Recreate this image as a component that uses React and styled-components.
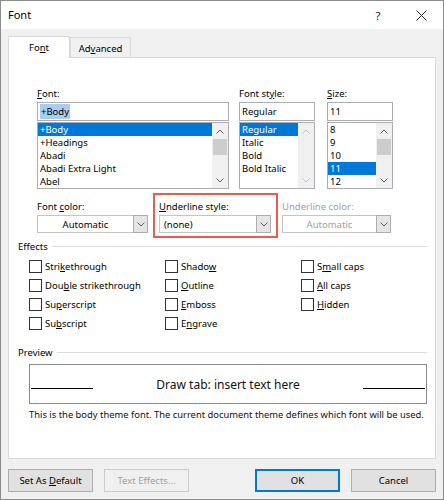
import React from 'react';
import styled, { createGlobalStyle, css } from 'styled-components';

const UI = '"Noto Sans", "Segoe UI", sans-serif';

const Global = createGlobalStyle`
  html, body { margin: 0; padding: 0; background: #fff; }
  body { font-family: ${UI}; font-size: 9.5px; color: #000; }
  * { box-sizing: border-box; }
`;

const Window = styled.div`
  width: 444px;
  height: 500px;
  border: 1px solid #8c8c8c;
  background: #f0f0f0;
  display: flex;
  flex-direction: column;
`;

const TitleBar = styled.div`
  height: 28px;
  background: #fff;
  display: flex;
  align-items: center;
  padding: 0 7px;
`;

const Title = styled.div`
  font-size: 11px;
  flex: 1;
  line-height: 14px;
`;

const TitleButton = styled.div`
  width: 30px;
  height: 28px;
  display: flex;
  align-items: center;
  justify-content: center;
  font-size: 11.5px;
  color: #222;
  margin-left: ${(p) => p.$ml || 0}px;
`;

const TabRow = styled.div`
  height: 28px;
  display: flex;
  align-items: flex-end;
  padding-left: 7px;
`;

const Tab = styled.div`
  display: flex;
  align-items: center;
  justify-content: center;
  border: 1px solid #d9d9d9;
  border-bottom: none;
  ${(p) =>
    p.$active
      ? css`
          width: 62px;
          height: 22px;
          margin-bottom: -1px;
          background: #fff;
          position: relative;
          z-index: 1;
        `
      : css`
          width: 61px;
          height: 20px;
          background: #f0f0f0;
          padding-top: 1px;
        `}
`;

const Panel = styled.div`
  margin: 0 7px;
  height: 402px;
  background: #fff;
  border: 1px solid #d9d9d9;
  padding: 28px 8px 0 9px;
  display: flex;
  flex-direction: column;
`;

const Row = styled.div`
  display: flex;
  margin-left: 19px;
  margin-top: ${(p) => p.$mt || 0}px;
`;

const Column = styled.div`
  width: ${(p) => p.$w}px;
  margin-left: ${(p) => p.$ml || 0}px;
  display: flex;
  flex-direction: column;
  position: relative;
  ${(p) =>
    p.$highlight &&
    css`
      &::before {
        content: '';
        position: absolute;
        top: -6px;
        left: -6px;
        right: -7px;
        bottom: -5px;
        border: 2px solid #ef5a4e;
        pointer-events: none;
      }
    `}
`;

const Label = styled.div`
  height: 15px;
  line-height: 15px;
  margin-bottom: 1px;
  white-space: nowrap;
  color: ${(p) => (p.$disabled ? '#a0a0a0' : '#000')};
`;

const U = styled.span`
  text-decoration: underline;
  text-underline-offset: 1px;
`;

const TextBox = styled.div`
  height: 19px;
  border: 1px solid #abadb3;
  display: flex;
  align-items: center;
  padding-left: 2px;
`;

const Sel = styled.span`
  background: #a8cdf0;
  padding: 0 1px;
  line-height: 15px;
`;

const ListBox = styled.div`
  margin-top: 1px;
  height: 67px;
  border: 1px solid #abadb3;
  display: flex;
`;

const Items = styled.div`
  flex: 1;
  display: flex;
  flex-direction: column;
`;

const Item = styled.div`
  height: 13px;
  line-height: 13px;
  padding-left: 2px;
  white-space: nowrap;
  ${(p) =>
    p.$selected &&
    css`
      background: #0078d7;
      color: #fff;
    `}
`;

const ScrollBar = styled.div`
  width: 16px;
  background: #f0f0f0;
  display: flex;
  flex-direction: column;
`;

const ScrollArrow = styled.div`
  height: 16px;
  display: flex;
  align-items: center;
  justify-content: center;
`;

const Track = styled.div`
  flex: 1;
`;

const Thumb = styled.div`
  height: 16px;
  margin: 0 1px;
  background: #cdcdcd;
`;

const Combo = styled.div`
  height: 18px;
  border: 1px solid #c4c4c4;
  background: #fff;
  display: flex;
`;

const ComboValue = styled.div`
  flex: 1;
  display: flex;
  align-items: center;
  justify-content: ${(p) => (p.$center ? 'center' : 'flex-start')};
  padding-left: ${(p) => (p.$center ? 0 : 4)}px;
  color: ${(p) => (p.$disabled ? '#a0a0a0' : '#000')};
`;

const DropButton = styled.div`
  width: 15px;
  margin: -1px -1px -1px 0;
  border: 1px solid #adadad;
  background: #e5e5e5;
  display: flex;
  align-items: center;
  justify-content: center;
`;

const GroupHeader = styled.div`
  display: flex;
  align-items: center;
  height: 14px;
  margin-top: ${(p) => p.$mt || 0}px;
`;

const GroupLine = styled.div`
  flex: 1;
  margin-left: 4px;
  border-top: 1px solid #dcdcdc;
`;

const CheckGrid = styled.div`
  display: grid;
  grid-template-columns: repeat(3, 136px);
  grid-auto-rows: 19px;
  margin: 4px 0 0 11px;
`;

const Check = styled.div`
  display: flex;
  align-items: center;
`;

const Box = styled.div`
  width: 13px;
  height: 13px;
  border: 1px solid #333;
  background: #fff;
  margin-right: 3px;
`;

const PreviewBox = styled.div`
  margin: 5px 0 0 11px;
  height: 40px;
  border: 1px solid #8c8c8c;
  display: flex;
  align-items: center;
  justify-content: space-between;
  padding: 0 1px;
`;

const PreviewText = styled.div`
  font-size: 12px;
  color: #111;
`;

const Rule = styled.div`
  width: 62px;
  height: 10px;
  border-bottom: 1px solid #000;
`;

const Note = styled.div`
  margin: 4px 0 0 11px;
  line-height: 14px;
  font-size: 9.4px;
  color: #111;
  white-space: nowrap;
`;

const ButtonRow = styled.div`
  display: flex;
  margin-top: 10px;
  padding: 0 7px;
`;

const Button = styled.div`
  width: 85px;
  height: 23px;
  display: flex;
  align-items: center;
  justify-content: center;
  white-space: pre;
  margin-left: ${(p) => (p.$auto ? 'auto' : `${p.$ml || 0}px`)};
  background: ${(p) => (p.$disabled ? '#f0f0f0' : '#e1e1e1')};
  border: 1px solid ${(p) => (p.$disabled ? '#cccccc' : p.$default ? '#0078d7' : '#adadad')};
  color: ${(p) => (p.$disabled ? '#a0a0a0' : '#000')};
  ${(p) => p.$default && css`box-shadow: inset 0 0 0 1px #0078d7;`}
`;

const Chevron = ({ up, color = '#606060' }) => (
  <svg width="8" height="5" viewBox="0 0 8 5">
    <path
      d={up ? 'M0.5 4.5 L4 1 L7.5 4.5' : 'M0.5 0.5 L4 4 L7.5 0.5'}
      fill="none"
      stroke={color}
      strokeWidth="1"
    />
  </svg>
);

const Scroll = ({ disabled }) => (
  <ScrollBar>
    <ScrollArrow>
      <Chevron up color={disabled ? '#c4c4c4' : '#606060'} />
    </ScrollArrow>
    <Track>{!disabled && <Thumb />}</Track>
    <ScrollArrow>
      <Chevron color={disabled ? '#c4c4c4' : '#606060'} />
    </ScrollArrow>
  </ScrollBar>
);

const List = ({ items, selected, disabledScroll }) => (
  <ListBox>
    <Items>
      {items.map((it) => (
        <Item key={it} $selected={it === selected}>
          {it}
        </Item>
      ))}
    </Items>
    <Scroll disabled={disabledScroll} />
  </ListBox>
);

const Drop = ({ children, center, disabled }) => (
  <Combo>
    <ComboValue $center={center} $disabled={disabled}>
      {children}
    </ComboValue>
    <DropButton>
      <Chevron color="#606060" />
    </DropButton>
  </Combo>
);

const effects = [
  [<>Stri<U>k</U>ethrough</>, <>Shado<U>w</U></>, <>S<U>m</U>all caps</>],
  [<>Dou<U>b</U>le strikethrough</>, <><U>O</U>utline</>, <><U>A</U>ll caps</>],
  [<>Su<U>p</U>erscript</>, <><U>E</U>mboss</>, <><U>H</U>idden</>],
  [<>Su<U>b</U>script</>, <>E<U>n</U>grave</>, null],
];

export default function App() {
  return (
    <>
      <Global />
      <Window>
        <TitleBar>
          <Title>Font</Title>
          <TitleButton>?</TitleButton>
          <TitleButton $ml={13}>
            <svg width="11" height="11" viewBox="0 0 11 11">
              <path d="M0.5 0.5 L10.5 10.5 M10.5 0.5 L0.5 10.5" stroke="#222" strokeWidth="1" />
            </svg>
          </TitleButton>
        </TitleBar>
        <TabRow>
          <Tab $active>
            <span>
              Fo<U>n</U>t
            </span>
          </Tab>
          <Tab>
            <span>
              Ad<U>v</U>anced
            </span>
          </Tab>
        </TabRow>
        <Panel>
          <Row>
            <Column $w={192}>
              <Label>
                <U>F</U>ont:
              </Label>
              <TextBox>
                <Sel>+Body</Sel>
              </TextBox>
              <List
                items={['+Body', '+Headings', 'Abadi', 'Abadi Extra Light', 'Abel']}
                selected="+Body"
              />
            </Column>
            <Column $w={76} $ml={10}>
              <Label>
                Font st<U>y</U>le:
              </Label>
              <TextBox>Regular</TextBox>
              <List
                items={['Regular', 'Italic', 'Bold', 'Bold Italic']}
                selected="Regular"
                disabledScroll
              />
            </Column>
            <Column $w={66} $ml={12}>
              <Label>
                <U>S</U>ize:
              </Label>
              <TextBox>11</TextBox>
              <List items={['8', '9', '10', '11', '12']} selected="11" />
            </Column>
          </Row>
          <Row $mt={10}>
            <Column $w={111}>
              <Label>
                Font <U>c</U>olor:
              </Label>
              <Drop center>Automatic</Drop>
            </Column>
            <Column $w={112} $ml={11} $highlight>
              <Label>
                <U>U</U>nderline style:
              </Label>
              <Drop>(none)</Drop>
            </Column>
            <Column $w={109} $ml={11}>
              <Label $disabled>Underline color:</Label>
              <Drop center disabled>
                Automatic
              </Drop>
            </Column>
          </Row>
          <GroupHeader $mt={6}>
            Effects
            <GroupLine />
          </GroupHeader>
          <CheckGrid>
            {effects.flat().map((e, i) =>
              e ? (
                <Check key={i}>
                  <Box />
                  <span>{e}</span>
                </Check>
              ) : (
                <div key={i} />
              )
            )}
          </CheckGrid>
          <GroupHeader $mt={12}>
            Preview
            <GroupLine />
          </GroupHeader>
          <PreviewBox>
            <Rule />
            <PreviewText>Draw tab: insert text here</PreviewText>
            <Rule />
          </PreviewBox>
          <Note>
            This is the body theme font. The current document theme defines which font will be used.
          </Note>
        </Panel>
        <ButtonRow>
          <Button>
            <span>
              Set As <U>D</U>efault
            </span>
          </Button>
          <Button $ml={11} $disabled>
            Text Effects...
          </Button>
          <Button $auto $default>
            OK
          </Button>
          <Button $ml={11}>Cancel</Button>
        </ButtonRow>
      </Window>
    </>
  );
}
